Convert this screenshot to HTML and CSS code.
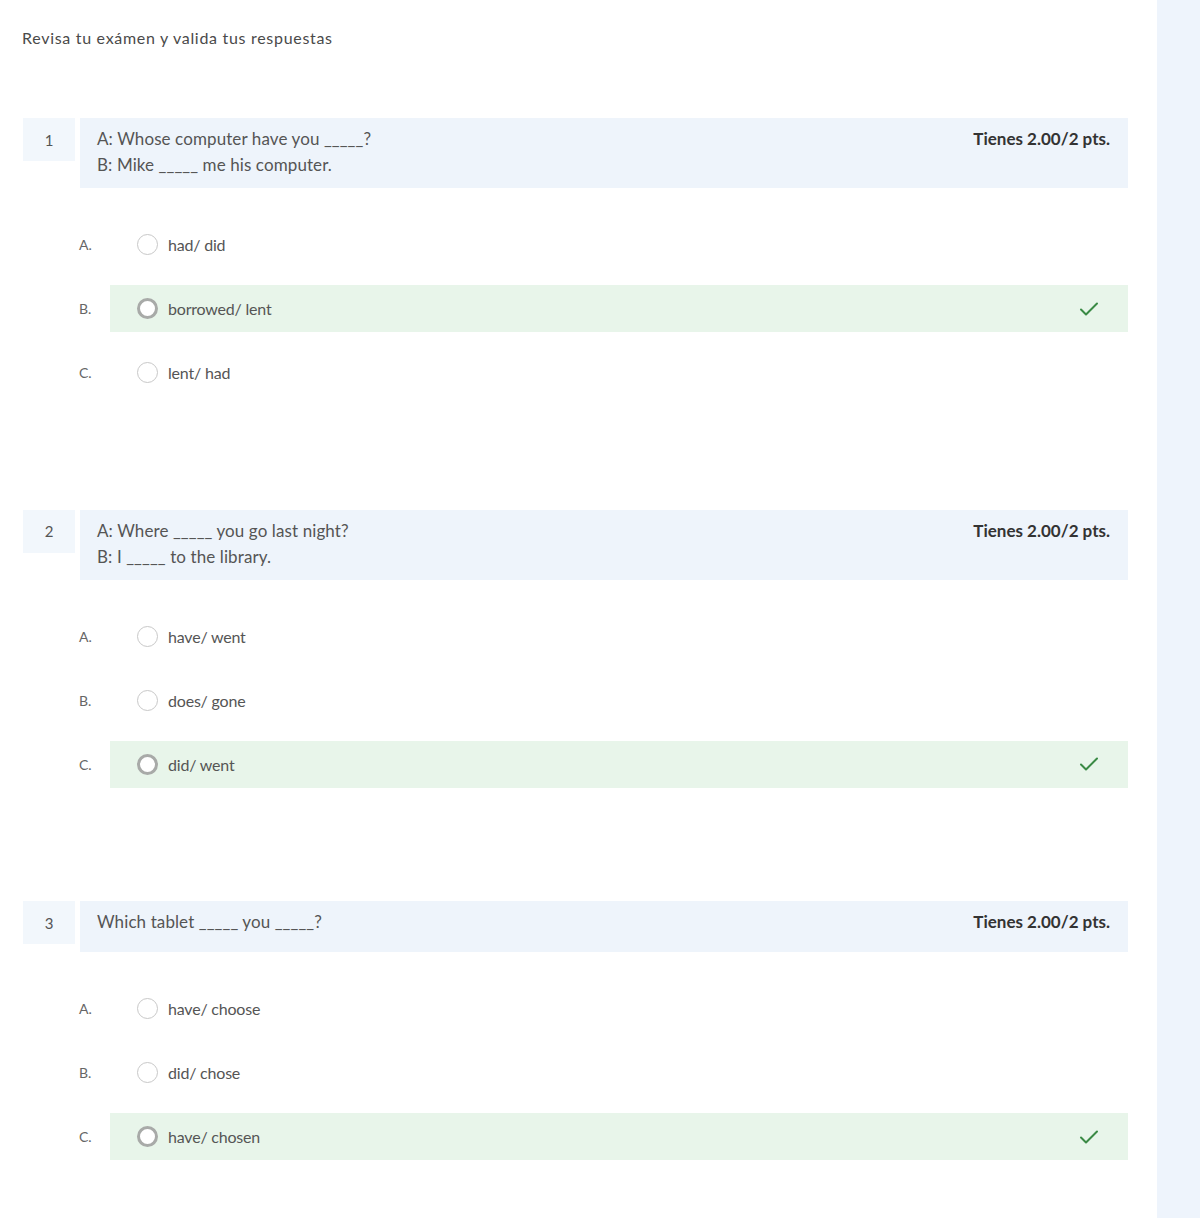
FILE: index.html
```html
<!DOCTYPE html>
<html lang="es">
<head>
<meta charset="utf-8">
<title>Revisa tu exámen</title>
<link rel="stylesheet" href="styles.css">
</head>
<body>
<div class="page">
  <main class="main">
    <h1 class="title">Revisa tu exámen y valida tus respuestas</h1>

    <section class="question">
      <div class="qhead">
        <div class="qnum">1</div>
        <div class="qbox">
          <div class="qtext">
            <div>A: Whose computer have you _____?</div>
            <div>B: Mike _____ me his computer.</div>
          </div>
          <div class="score">Tienes 2.00/2 pts.</div>
        </div>
      </div>
      <div class="options">
        <div class="opt"><span class="letter">A.</span><div class="obox"><span class="radio"></span><span class="otext">had/ did</span></div></div>
        <div class="opt"><span class="letter">B.</span><div class="obox correct"><span class="radio sel"></span><span class="otext">borrowed/ lent</span><svg class="check" viewBox="0 0 24 24" width="24" height="24"><path d="M4 12.5l5 5L20 6.5" fill="none" stroke="#3a8a45" stroke-width="2" stroke-linecap="round" stroke-linejoin="round"/></svg></div></div>
        <div class="opt"><span class="letter">C.</span><div class="obox"><span class="radio"></span><span class="otext">lent/ had</span></div></div>
      </div>
    </section>

    <section class="question">
      <div class="qhead">
        <div class="qnum">2</div>
        <div class="qbox">
          <div class="qtext">
            <div>A: Where _____ you go last night?</div>
            <div>B: I _____ to the library.</div>
          </div>
          <div class="score">Tienes 2.00/2 pts.</div>
        </div>
      </div>
      <div class="options">
        <div class="opt"><span class="letter">A.</span><div class="obox"><span class="radio"></span><span class="otext">have/ went</span></div></div>
        <div class="opt"><span class="letter">B.</span><div class="obox"><span class="radio"></span><span class="otext">does/ gone</span></div></div>
        <div class="opt"><span class="letter">C.</span><div class="obox correct"><span class="radio sel"></span><span class="otext">did/ went</span><svg class="check" viewBox="0 0 24 24" width="24" height="24"><path d="M4 12.5l5 5L20 6.5" fill="none" stroke="#3a8a45" stroke-width="2" stroke-linecap="round" stroke-linejoin="round"/></svg></div></div>
      </div>
    </section>

    <section class="question">
      <div class="qhead">
        <div class="qnum">3</div>
        <div class="qbox">
          <div class="qtext">
            <div>Which tablet _____ you _____?</div>
          </div>
          <div class="score">Tienes 2.00/2 pts.</div>
        </div>
      </div>
      <div class="options">
        <div class="opt"><span class="letter">A.</span><div class="obox"><span class="radio"></span><span class="otext">have/ choose</span></div></div>
        <div class="opt"><span class="letter">B.</span><div class="obox"><span class="radio"></span><span class="otext">did/ chose</span></div></div>
        <div class="opt"><span class="letter">C.</span><div class="obox correct"><span class="radio sel"></span><span class="otext">have/ chosen</span><svg class="check" viewBox="0 0 24 24" width="24" height="24"><path d="M4 12.5l5 5L20 6.5" fill="none" stroke="#3a8a45" stroke-width="2" stroke-linecap="round" stroke-linejoin="round"/></svg></div></div>
      </div>
    </section>
  </main>
  <aside class="sidebar"></aside>
</div>
</body>
</html>
```

FILE: styles.css
```css
* { box-sizing: border-box; }
html, body { margin: 0; padding: 0; background: #ffffff; }
body {
  font-family: Lato, "Open Sans", sans-serif;
  color: #555;
}
.page {
  display: flex;
  min-height: 1218px;
}
.main {
  flex: 1;
  padding: 28px 29px 0 22px;
}
.sidebar {
  width: 43px;
  flex: none;
  background: #eef4fc;
}
.title {
  margin: 0 0 70px 0;
  font-size: 16px;
  line-height: 20px;
  font-weight: 400;
  color: #4a4a4a;
  letter-spacing: 0.7px;
}
.question {
  margin-bottom: 113.5px;
}
.qhead {
  display: flex;
  align-items: flex-start;
  gap: 5px;
}
.qnum {
  width: 52px;
  height: 43px;
  margin-left: 1px;
  background: #f2f7fc;
  display: flex;
  align-items: center;
  justify-content: center;
  font-size: 15px;
  color: #555;
}
.qbox {
  flex: 1;
  min-height: 51px;
  background: #eef4fb;
  padding: 8px 18px 10px 17px;
  display: flex;
  justify-content: space-between;
  align-items: flex-start;
}
.qtext {
  font-size: 17px;
  line-height: 26px;
  color: #555;
  letter-spacing: 0.1px;
}
.score {
  font-size: 17px;
  line-height: 26px;
  font-weight: 700;
  color: #333;
  letter-spacing: 0;
}
.options {
  margin-top: 33px;
  display: flex;
  flex-direction: column;
  gap: 17px;
}
.opt {
  display: flex;
  align-items: center;
  padding-left: 57px;
}
.letter {
  width: 31px;
  flex: none;
  font-size: 14px;
  color: #666;
}
.obox {
  flex: 1;
  height: 47px;
  display: flex;
  align-items: center;
  padding: 0 27px 0 27px;
}
.obox.correct {
  background: #e8f5ea;
}
.radio {
  width: 21px;
  height: 21px;
  border-radius: 50%;
  border: 1px solid #c8c8c8;
  background: #fff;
  flex: none;
}
.radio.sel {
  border: 3px solid #a8aaa8;
}
.otext {
  margin-left: 10px;
  font-size: 16px;
  color: #555;
  letter-spacing: -0.2px;
}
.check {
  margin-left: auto;
}
```
